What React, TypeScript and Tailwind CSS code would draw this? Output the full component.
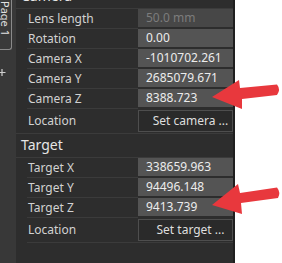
import React from "react";

const font = { fontFamily: '"Noto Sans", "Open Sans", sans-serif' };

function Row({ label, value, disabled }: { label: string; value: string; disabled?: boolean }) {
  return (
    <div className="flex h-[20px]">
      <div className="ml-[11px] w-[111px] border-b border-[#3b3b3b] pl-[1px] text-[12px] leading-[19px] text-[#d2d2d2]">
        {label}
      </div>
      <div className="w-[95px]">
        <div
          className={
            disabled
              ? "h-[18px] bg-[#474747] pl-[8px] text-[12px] leading-[18px] text-[#7c7c7c]"
              : "h-[18px] bg-[#545454] pl-[8px] text-[12px] leading-[18px] text-[#ececec]"
          }
        >
          {value}
        </div>
      </div>
    </div>
  );
}

function LocationRow({ text }: { text: string }) {
  return (
    <div className="flex h-[24px]">
      <div className="ml-[11px] w-[111px] pl-[1px] text-[12px] leading-[24px] text-[#d2d2d2]">Location</div>
      <div className="w-[95px] pt-[1px]">
        <div className="flex h-[22px] items-center justify-center border border-[#4e4e4e] bg-[#2a2a2a] pl-[10px] text-[12px] text-[#dedede]">
          {text}
        </div>
      </div>
    </div>
  );
}

function Header({ text }: { text: string }) {
  return (
    <div className="h-[25px] border-y border-[#3b3b3b] pl-[5px] text-[14px] leading-[22px] text-[#e6e6e6]">{text}</div>
  );
}

export default function App() {
  return (
    <div className="relative flex h-[263px] w-[282px] overflow-hidden bg-white" style={font}>
      <div className="flex w-[16px] shrink-0 flex-col bg-[#383838]">
        <div className="h-[50px] w-[12px] rounded-br-[3px] border-r border-b border-[#8a8a8a] bg-[#3a3a3a]">
          <div
            className="pt-[1px] text-[11px] leading-[11px] text-[#e0e0e0]"
            style={{ writingMode: "vertical-rl" }}
          >
            Page 1
          </div>
        </div>
        <svg width="8" height="10" className="mt-[18px]" viewBox="0 0 8 10">
          <path d="M0 4.5H5.5M2 1V8" stroke="#cfcfcf" strokeWidth="1.2" fill="none" />
        </svg>
      </div>
      <div className="flex w-[217px] shrink-0 flex-col bg-[#2d2d2d]">
        <div className="-mt-[16px]">
          <Header text="Camera" />
        </div>
        <Row label="Lens length" value="50.0 mm" disabled />
        <Row label="Rotation" value="0.00" />
        <Row label="Camera X" value="-1010702.261" />
        <Row label="Camera Y" value="2685079.671" />
        <Row label="Camera Z" value="8388.723" />
        <LocationRow text="Set camera ..." />
        <Header text="Target" />
        <Row label="Target X" value="338659.963" />
        <Row label="Target Y" value="94496.148" />
        <Row label="Target Z" value="9413.739" />
        <LocationRow text="Set target ..." />
        <div className="ml-[11px] h-[1px] w-[206px] bg-[#3b3b3b]" />
      </div>
      <div className="w-[2px] shrink-0 bg-[#1f1f1f]" />
      <svg className="pointer-events-none absolute left-0 top-0" width="282" height="263" viewBox="0 0 282 263">
        <path
          d="M212 97 L239 80 L240 88 L277 84.5 Q281 89.5 277 95 L242 99 L242 109 Z"
          fill="#e8383d"
        />
        <path
          d="M212 205 L238 184 L240 193 L277 187.5 Q281 192.5 278 198 L241 203 L242 214 Z"
          fill="#e8383d"
        />
      </svg>
    </div>
  );
}
